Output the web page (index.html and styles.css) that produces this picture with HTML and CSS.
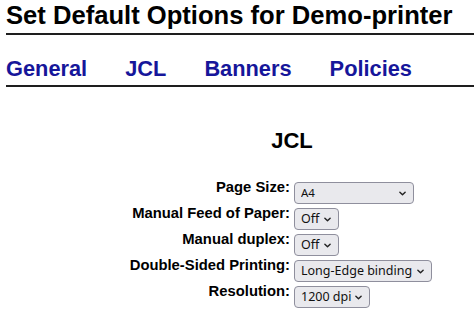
FILE: index.html
```html
<!DOCTYPE html>
<html lang="en">
<head>
<meta charset="utf-8">
<title>Set Default Options for Demo-printer</title>
<link rel="stylesheet" href="styles.css">
</head>
<body>
<div class="page">
  <h1 class="title">Set Default Options for Demo-printer</h1>
  <nav class="tabs">
    <a href="#general">General</a>
    <a href="#jcl">JCL</a>
    <a href="#banners">Banners</a>
    <a href="#policies">Policies</a>
  </nav>
  <form class="options">
    <h2 class="section">JCL</h2>
    <label class="lbl" for="ps">Page Size:</label>
    <span class="sel w-a4"><select id="ps" class="small"><option>A4</option></select><svg class="chev" viewBox="0 0 8 5"><path d="M1 1 L4 4 L7 1"/></svg></span>
    <label class="lbl" for="mf">Manual Feed of Paper:</label>
    <span class="sel w-off"><select id="mf"><option>Off</option></select><svg class="chev" viewBox="0 0 8 5"><path d="M1 1 L4 4 L7 1"/></svg></span>
    <label class="lbl" for="md">Manual duplex:</label>
    <span class="sel w-off"><select id="md"><option>Off</option></select><svg class="chev" viewBox="0 0 8 5"><path d="M1 1 L4 4 L7 1"/></svg></span>
    <label class="lbl" for="ds">Double-Sided Printing:</label>
    <span class="sel w-dup"><select id="ds"><option>Long-Edge binding</option></select><svg class="chev" viewBox="0 0 8 5"><path d="M1 1 L4 4 L7 1"/></svg></span>
    <label class="lbl" for="rs">Resolution:</label>
    <span class="sel w-res"><select id="rs"><option>1200 dpi</option></select><svg class="chev" viewBox="0 0 8 5"><path d="M1 1 L4 4 L7 1"/></svg></span>
  </form>
</div>
</body>
</html>
```

FILE: styles.css
```css
html {
  overflow: hidden;
  background: #fff;
}
body {
  margin: 0;
  padding: 0 0 0 6px;
  font-family: "Liberation Sans", Arial, sans-serif;
  color: #000;
}
.page {
  overflow: hidden;
}
.title {
  margin: 0;
  font-size: 25.6px;
  font-weight: bold;
  line-height: 30px;
  padding-bottom: 3px;
  border-bottom: 2px solid #1e1e1e;
  white-space: nowrap;
}
.tabs {
  margin-top: 21px;
  display: flex;
  gap: 38px;
  line-height: 25px;
  padding-bottom: 4px;
  border-bottom: 2px solid #1e1e1e;
}
.tabs a {
  font-size: 21.8px;
  font-weight: bold;
  color: #16169a;
  text-decoration: none;
}
.options {
  display: grid;
  width: 572px;
  grid-template-columns: 1fr 1fr;
  grid-template-rows: auto;
  grid-auto-rows: 26px;
  column-gap: 4px;
  margin: 0;
}
.section {
  grid-column: 1 / 3;
  margin: 41px 0 25px;
  font-size: 22px;
  line-height: 26px;
  font-weight: bold;
  text-align: center;
}
.lbl {
  font-size: 14.8px;
  font-weight: bold;
  line-height: 17px;
  text-align: right;
  white-space: nowrap;
}
.sel {
  position: relative;
  align-self: start;
  margin-top: 3px;
  height: 22px;
}
.sel select {
  appearance: none;
  -webkit-appearance: none;
  box-sizing: border-box;
  width: 100%;
  height: 22px;
  margin: 0;
  padding: 0 0 0 6px;
  border: 1px solid #8f8f9d;
  border-radius: 4px;
  background: #e9e9ed;
  color: #111;
  font-family: "Noto Sans", "Open Sans", sans-serif;
  font-size: 12.5px;
  line-height: 20px;
}
.sel select.small {
  font-size: 11.5px;
}
.w-a4 { width: 120px; }
.w-off { width: 45px; }
.w-dup { width: 138px; }
.w-res { width: 76px; }
.chev {
  position: absolute;
  right: 8px;
  top: 9px;
  width: 7px;
  height: 5px;
  fill: none;
  stroke: #222;
  stroke-width: 1.6;
  stroke-linecap: round;
  stroke-linejoin: round;
}
```
